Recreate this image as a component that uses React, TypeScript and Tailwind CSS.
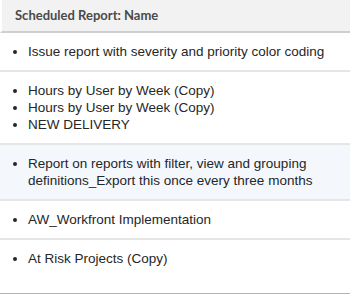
const rows: { lines: string[]; highlight?: boolean; extra?: boolean }[] = [
  { lines: ["Issue report with severity and priority color coding"] },
  {
    lines: [
      "Hours by User by Week (Copy)",
      "Hours by User by Week (Copy)",
      "NEW DELIVERY",
    ],
  },
  {
    lines: [
      "Report on reports with filter, view and grouping definitions_Export this once every three months",
    ],
    highlight: true,
  },
  { lines: ["AW_Workfront Implementation"] },
  { lines: ["At Risk Projects (Copy)"], extra: true },
];

export default function App() {
  return (
    <div className="w-[350px] h-[294px] bg-white overflow-hidden">
      <div
        className="h-[33px] bg-[#f2f2f2] border-l-2 border-l-white border-b-2 border-b-[#cfcfcf] flex items-center pl-[13px]"
        style={{ fontFamily: "Lato, sans-serif" }}
      >
        <span className="text-[13px] font-bold text-[#4a4a4a]">
          Scheduled Report: Name
        </span>
      </div>
      {rows.map((row, i) => (
        <div
          key={i}
          className={`border-b-2 border-b-[#e6e6e6] last:border-b-[#b3b3b3] last:border-b-[1px] pl-[12px] pr-[8px] pt-[10px] ${
            row.highlight ? "bg-[#f4f8fd]" : "bg-white"
          } ${row.extra ? "pb-[26px]" : "pb-[10px]"}`}
          style={{ fontFamily: "'Liberation Sans', Arial, sans-serif" }}
        >
          <ul className="text-[13.5px] leading-[17px] text-[#262626]">
            {row.lines.map((line, j) => (
              <li key={j} className="flex">
                <span className="w-[16px] shrink-0 flex items-center h-[17px]">
                  <span className="w-[4px] h-[4px] rounded-full bg-[#262626] ml-[1px]" />
                </span>
                <span>{line}</span>
              </li>
            ))}
          </ul>
        </div>
      ))}
    </div>
  );
}
